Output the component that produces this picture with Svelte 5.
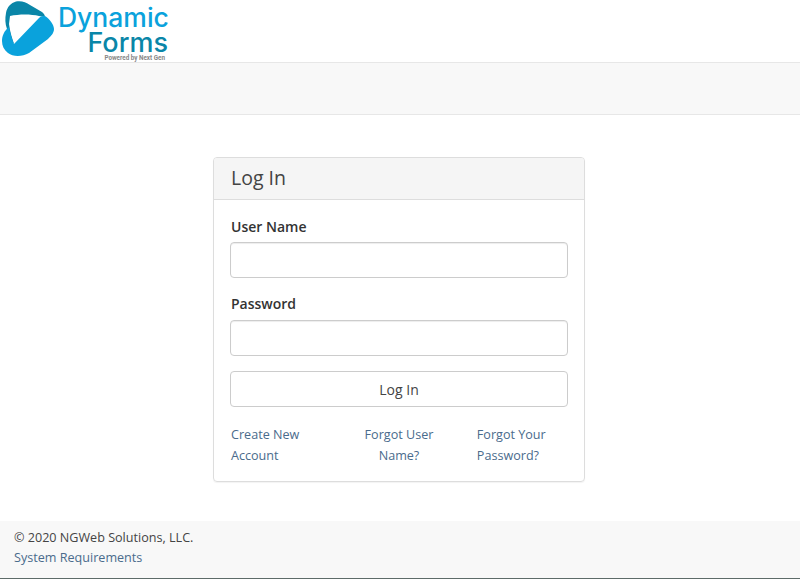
<script>
	const links = [
		{ lines: ['Create New', 'Account'], cls: 'first' },
		{ lines: ['Forgot User', 'Name?'], cls: 'center' },
		{ lines: ['Forgot Your', 'Password?'], cls: 'last' }
	];
</script>

<div class="page">
	<header class="top">
		<div class="logo">
			<svg class="mark" width="57" height="58" viewBox="0 0 57 58">
				<path d="M5 13 C6 7 10 3 15 1.5 C20 0.5 25 2 29 5 L41 12 C43 14 44 15 44 17 L38 16 C30 14 18 14 9 16 L8 24 C9 32 11 38 13 44 C10 41 8 36 6 29 C4 24 4 18 5 13Z" fill="#0a86a8" />
				<path d="M44 16 C49 19 53 25 53 29 C53 33 50 36 47 39 L28 53 C21 57 12 57 7 53 C3 50 1 46 1 41 C1 36 3 31 8 27 C9 33 11 39 13 44 L38 18 C40 16 42 16 44 16Z" fill="#0aa2dc" />
			</svg>
			<div class="wordmark">
				<div class="dynamic">Dynamic</div>
				<div class="forms">Forms</div>
				<div class="powered">Powered by Next Gen</div>
			</div>
		</div>
	</header>
	<div class="subnav"></div>

	<main class="content">
		<section class="panel">
			<h2 class="panel-heading">Log In</h2>
			<form class="panel-body">
				<label for="user">User Name</label>
				<input id="user" type="text" />
				<label for="pass">Password</label>
				<input id="pass" type="password" />
				<button type="button">Log In</button>
				<div class="links">
					{#each links as link}
						<a href="#top" class={link.cls}>{link.lines[0]}<br />{link.lines[1]}</a>
					{/each}
				</div>
			</form>
		</section>
	</main>

	<footer class="foot">
		<div>© 2020 NGWeb Solutions, LLC.</div>
		<a href="#top">System Requirements</a>
	</footer>
</div>

<style>
	:global(body) {
		margin: 0;
		background: #fff;
		font-family: "Open Sans", sans-serif;
		color: #333;
	}

	.page {
		height: 579px;
		display: flex;
		flex-direction: column;
		overflow: hidden;
	}

	.top {
		height: 62px;
		border-bottom: 1px solid #e7e7e7;
	}

	.logo {
		display: flex;
		align-items: flex-start;
		padding-left: 1px;
	}

	.mark {
		flex: none;
	}

	.wordmark {
		width: 110px;
		padding-top: 5px;
		text-align: right;
		font-family: Inter, sans-serif;
		font-weight: 500;
	}

	.dynamic {
		font-size: 26.5px;
		line-height: 25px;
		color: #0aa2dc;
	}

	.forms {
		font-size: 27px;
		line-height: 25px;
		color: #0a86a8;
	}

	.powered {
		font-family: Roboto, sans-serif;
		font-size: 6.3px;
		line-height: 6px;
		font-weight: 700;
		color: #888;
		padding-right: 3px;
		white-space: nowrap;
	}

	.subnav {
		height: 51px;
		background: #f8f8f8;
		border-bottom: 1px solid #e7e7e7;
	}

	.content {
		flex: 1;
		padding-top: 42px;
		display: flex;
		justify-content: center;
	}

	.panel {
		width: 370px;
		height: 323px;
		margin-left: -2px;
		border: 1px solid #ddd;
		border-radius: 4px;
		box-shadow: 0 1px 1px rgba(0, 0, 0, 0.05);
	}

	.panel-heading {
		margin: 0;
		height: 41px;
		padding-left: 17px;
		background: #f5f5f5;
		border-bottom: 1px solid #ddd;
		border-radius: 3px 3px 0 0;
		font-size: 19.5px;
		font-weight: 400;
		line-height: 40px;
		color: #444;
	}

	.panel-body {
		display: flex;
		flex-direction: column;
		padding: 16px 16px 0;
	}

	label {
		font-size: 14px;
		font-weight: 600;
		line-height: 22px;
		height: 26px;
		padding-left: 1px;
	}

	input {
		box-sizing: border-box;
		height: 36px;
		border: 1px solid #ccc;
		border-radius: 4px;
		margin-bottom: 15px;
		box-shadow: inset 0 1px 1px rgba(0, 0, 0, 0.075);
	}

	input + label {
		height: 27px;
	}

	button {
		height: 36px;
		background: #fff;
		border: 1px solid #ccc;
		border-radius: 4px;
		font-family: inherit;
		font-size: 14px;
		color: #444;
	}

	.links {
		display: grid;
		grid-template-columns: 1fr 1fr 1fr;
		margin-top: 17px;
		font-size: 12.6px;
		line-height: 21px;
	}

	.links a,
	.foot a {
		color: #4a6b8c;
		text-decoration: none;
	}

	.links a.first {
		padding-left: 1px;
	}

	.links a.center {
		text-align: center;
	}

	.links a.last {
		padding-left: 21.5px;
	}

	.foot {
		height: 58px;
		box-sizing: border-box;
		background: #f8f8f8;
		border-bottom: 1px solid #5d6b68;
		padding: 7px 14px 0;
		font-size: 12.6px;
		line-height: 19.5px;
		color: #444;
	}
</style>
